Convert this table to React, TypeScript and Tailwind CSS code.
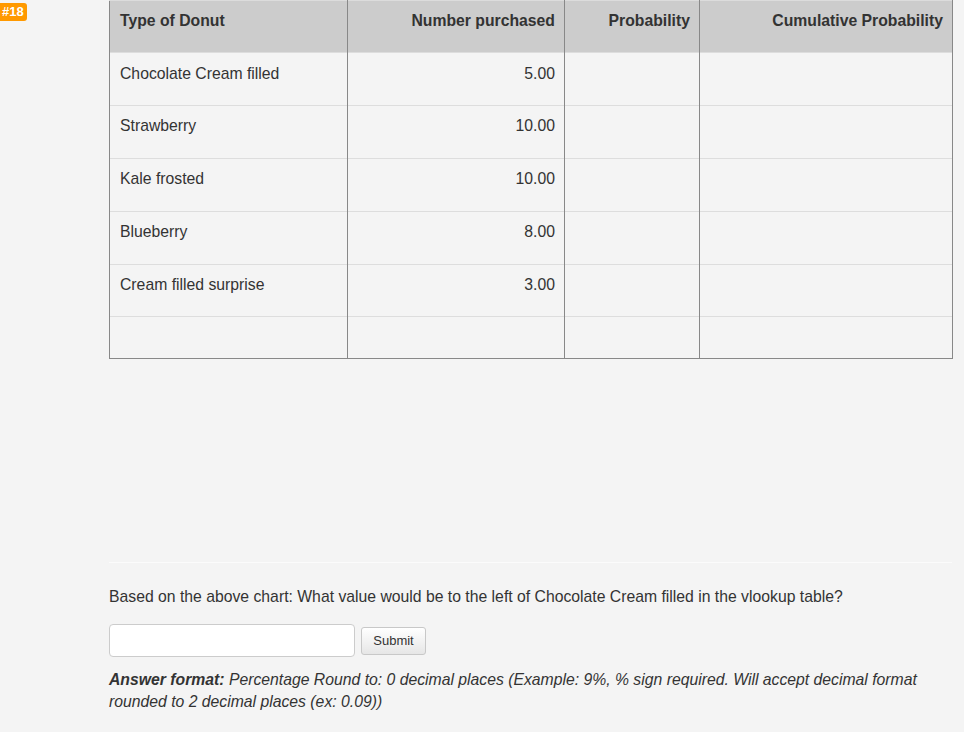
import React from "react";

const rows = [
  { name: "Chocolate Cream filled", n: "5.00" },
  { name: "Strawberry", n: "10.00" },
  { name: "Kale frosted", n: "10.00" },
  { name: "Blueberry", n: "8.00" },
  { name: "Cream filled surprise", n: "3.00" },
];

export default function App() {
  return (
    <div
      className="min-h-[732px] w-[964px] bg-[#f4f4f4] text-[#333] flex"
      style={{ fontFamily: '"Liberation Sans", Arial, sans-serif' }}
    >
      <div className="w-[109px] shrink-0 pt-[3px]">
        <div className="w-[27px] h-[18px] bg-[#ff9900] text-white font-bold text-[13px] leading-[18px] pl-[2px] rounded-r-[3px]">
          #18
        </div>
      </div>
      <div className="w-[843px] shrink-0">
        <table className="border-collapse text-[15.75px] leading-[18px] w-[843px] table-fixed">
          <colgroup>
            <col className="w-[238px]" />
            <col className="w-[217px]" />
            <col className="w-[135px]" />
            <col className="w-[253px]" />
          </colgroup>
          <thead>
            <tr className="bg-[#cccccc] h-[52px]">
              <th className="border-x border-[#888] border-t border-t-[#dcdcdc] text-left font-bold align-top pt-[11px] px-[10px]">
                Type of Donut
              </th>
              <th className="border-x border-[#888] border-t border-t-[#dcdcdc] text-right font-bold align-top pt-[11px] px-[9px]">
                Number purchased
              </th>
              <th className="border-x border-[#888] border-t border-t-[#dcdcdc] text-right font-bold align-top pt-[11px] px-[9px]">
                Probability
              </th>
              <th className="border-x border-[#888] border-t border-t-[#dcdcdc] text-right font-bold align-top pt-[11px] px-[9px]">
                Cumulative Probability
              </th>
            </tr>
          </thead>
          <tbody>
            {rows.map((r, i) => (
              <tr key={i} className={i === 4 ? "h-[52px]" : "h-[53px]"}>
                <td
                  className={
                    i === 0
                      ? "border-x border-[#888] border-t border-t-[#dddddd] align-top pt-[12px] px-[10px]"
                      : "border-x border-[#888] border-t border-t-[#dddddd] align-top pt-[11px] px-[10px]"
                  }
                >
                  {r.name}
                </td>
                <td
                  className={
                    i === 0
                      ? "border-x border-[#888] border-t border-t-[#dddddd] align-top pt-[12px] px-[9px] text-right"
                      : "border-x border-[#888] border-t border-t-[#dddddd] align-top pt-[11px] px-[9px] text-right"
                  }
                >
                  {r.n}
                </td>
                <td className="border-x border-[#888] border-t border-t-[#dddddd]"></td>
                <td className="border-x border-[#888] border-t border-t-[#dddddd]"></td>
              </tr>
            ))}
            <tr className="h-[42px]">
              <td className="border-x border-b border-[#888] border-t border-t-[#dddddd]"></td>
              <td className="border-x border-b border-[#888] border-t border-t-[#dddddd]"></td>
              <td className="border-x border-b border-[#888] border-t border-t-[#dddddd]"></td>
              <td className="border-x border-b border-[#888] border-t border-t-[#dddddd]"></td>
            </tr>
          </tbody>
        </table>

        <div className="mt-[203px] h-px w-[843px] bg-[#fbfbfb]" />

        <p className="mt-[23px] text-[15.75px] leading-[22px]">
          Based on the above chart: What value would be to the left of Chocolate Cream filled in the vlookup table?
        </p>

        <div className="mt-[16px] flex items-center gap-[6px]">
          <input
            type="text"
            className="w-[246px] h-[33px] bg-white border border-[#cccccc] rounded-[4px] px-2 outline-none"
          />
          <button className="h-[28px] w-[65px] text-[13px] text-[#333] border border-[#c8c8c8] rounded-[3px] bg-gradient-to-b from-[#ffffff] to-[#e6e6e6]">
            Submit
          </button>
        </div>

        <p className="mt-[12px] text-[15.75px] leading-[22px] italic w-[843px] pr-[20px]">
          <b>Answer format:</b> Percentage Round to: 0 decimal places (Example: 9%, % sign required. Will accept decimal format rounded to 2 decimal places (ex: 0.09))
        </p>
      </div>
    </div>
  );
}
